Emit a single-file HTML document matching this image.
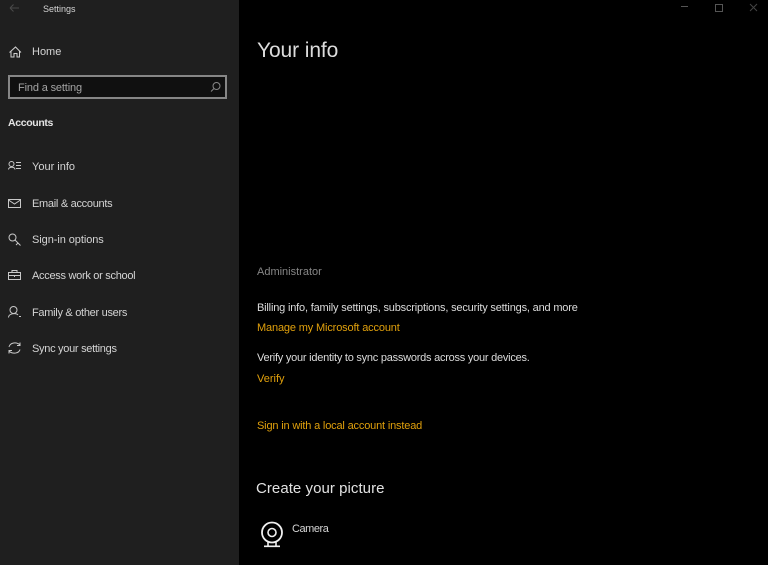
<!DOCTYPE html>
<html>
<head>
<meta charset="utf-8">
<style>
html,body{margin:0;padding:0;background:#000;}
#p{position:relative;width:768px;height:565px;overflow:hidden;background:#000;font-family:"Liberation Sans",sans-serif;}
#side{position:absolute;left:0;top:0;width:239px;height:565px;background:#1f1f1f;}
.t{position:absolute;white-space:nowrap;line-height:14px;height:14px;}
.n{font-size:11px;color:#d4d4d4;left:32px;letter-spacing:-0.29px;}
.w{font-size:11px;color:#dcdcdc;left:257px;}
.l{font-size:11px;color:#e0a00c;left:257px;}
svg{position:absolute;left:0;top:0;}
</style>
</head>
<body>
<div id="p">
<div id="side"></div>
<div style="position:absolute;left:8px;top:75px;width:215px;height:20px;border:2px solid #868686;background:#101010;"></div>
<svg width="768" height="565" fill="none" stroke-width="1">
  <path d="M10 8H19M10 8L13.5 4.5M10 8L13.5 11.5" stroke="#4a4a4a"/>
  <path d="M9.5 52.5L15.5 47L21 52.5M11 51V57H14V53.5H17V57H19.5V51" stroke="#d0d0d0"/>
  <circle cx="216.5" cy="86" r="3.5" stroke="#888"/><path d="M214 88.5L211 91.5" stroke="#888"/>
  <circle cx="11.5" cy="164" r="2.5" stroke="#c8c8c8"/><path d="M8.5 169.5C8.5 166.5 15 166.5 15 169.5M16 162.5H21M16 165.5H21M16 168.5H21" stroke="#c8c8c8"/>
  <path d="M8.5 199.5H20.5V207.5H8.5ZM8.5 200L14.5 204L20.5 200" stroke="#c8c8c8"/>
  <circle cx="12.5" cy="237.5" r="3.5" stroke="#c8c8c8"/><path d="M15 240L20.5 245.5M18 243L16 245" stroke="#c8c8c8"/>
  <path d="M8.5 272.5H20.5V279.5H8.5ZM12 272.5V270.5H17V272.5M8.5 275.5H20.5M14.5 275V277" stroke="#c8c8c8"/>
  <circle cx="13.5" cy="310" r="3.5" stroke="#c8c8c8"/><path d="M8.5 317.5C8.5 313.5 16 312.5 18 315" stroke="#c8c8c8"/><path d="M19 316.5H21" stroke="#c8c8c8"/>
  <path d="M9 347C10 342.5 16.5 341.5 20 345M20 349.5C19 353.5 12.5 354.5 9 351M20 342.5V345.5H17M9 353.5V350.5H12" stroke="#c8c8c8"/>
  <path d="M681 6.5H688" stroke="#555"/>
  <rect x="715.5" y="4.5" width="7" height="7" stroke="#555"/>
  <path d="M750 4L757 11M757 4L750 11" stroke="#444"/>
  <circle cx="272" cy="532.5" r="10" stroke="#f0f0f0" stroke-width="1.8"/>
  <circle cx="272" cy="532.5" r="4" stroke="#f0f0f0" stroke-width="1.6"/>
  <path d="M268 542V546M276 542V546M264 546.3H280" stroke="#f0f0f0" stroke-width="1.6"/>
</svg>
<div class="t" style="left:43px;top:2px;font-size:9px;color:#d4d4d4;">Settings</div>
<div class="t n" style="top:45px;letter-spacing:0;">Home</div>
<div class="t" style="left:18px;top:81px;font-size:11px;color:#a4a4a4;letter-spacing:-0.15px;">Find a setting</div>
<div class="t" style="left:8px;top:116px;font-size:10.5px;font-weight:bold;color:#e4e4e4;letter-spacing:-0.35px;">Accounts</div>
<div class="t n" style="top:160px;letter-spacing:0;">Your info</div>
<div class="t n" style="top:197px;">Email &amp; accounts</div>
<div class="t n" style="top:233px;letter-spacing:-0.07px;">Sign-in options</div>
<div class="t n" style="top:269px;">Access work or school</div>
<div class="t n" style="top:306px;">Family &amp; other users</div>
<div class="t n" style="top:342px;">Sync your settings</div>
<div class="t" style="left:257px;top:39px;font-size:21px;line-height:24px;height:24px;color:#dcdcdc;letter-spacing:-0.1px;">Your info</div>
<div class="t" style="left:257px;top:265px;font-size:11px;color:#868686;">Administrator</div>
<div class="t w" style="top:301px;letter-spacing:-0.18px;">Billing info, family settings, subscriptions, security settings, and more</div>
<div class="t l" style="top:321px;letter-spacing:-0.15px;">Manage my Microsoft account</div>
<div class="t w" style="top:351px;letter-spacing:-0.24px;">Verify your identity to sync passwords across your devices.</div>
<div class="t l" style="top:372px;">Verify</div>
<div class="t l" style="top:419px;letter-spacing:-0.17px;">Sign in with a local account instead</div>
<div class="t" style="left:256px;top:481px;font-size:15px;line-height:16px;height:16px;color:#e2e2e2;letter-spacing:0.05px;">Create your picture</div>
<div class="t" style="left:292px;top:522px;font-size:11px;color:#d4d4d4;letter-spacing:-0.45px;">Camera</div>
</div>
</body>
</html>
